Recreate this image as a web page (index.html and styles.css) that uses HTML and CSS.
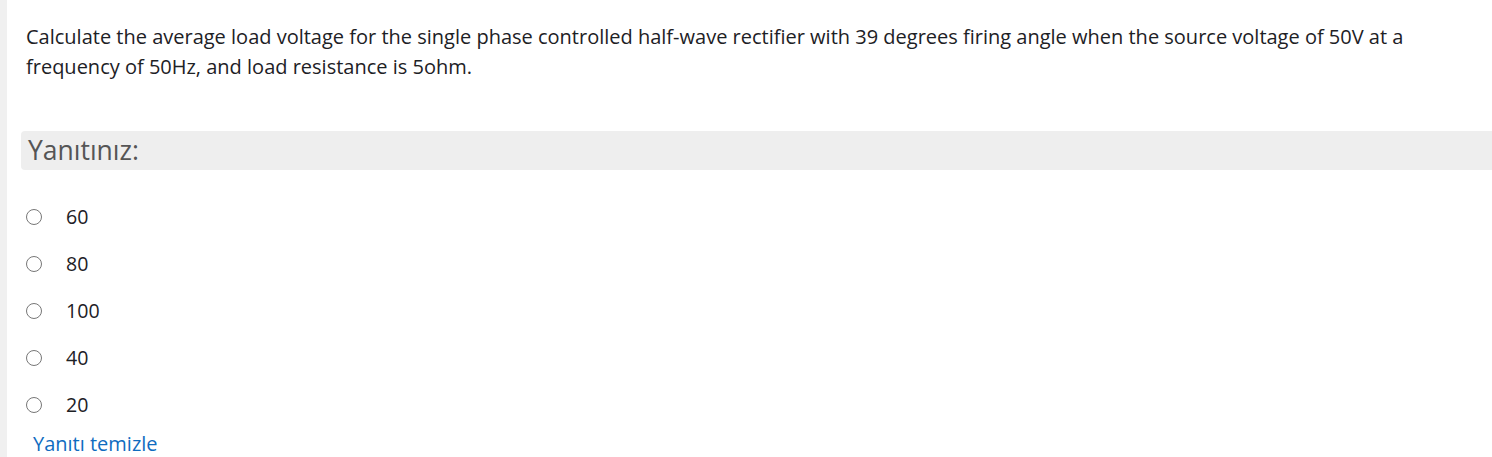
FILE: index.html
```html
<!DOCTYPE html>
<html lang="tr">
<head>
<meta charset="utf-8">
<title>Soru</title>
<link rel="stylesheet" href="styles.css">
</head>
<body>
<div class="page">
  <div class="strip"></div>
  <div class="main">
    <div class="qtext">Calculate the average load voltage for the single phase controlled half-wave rectifier with 39 degrees firing angle when the source voltage of 50V at a frequency of 50Hz, and load resistance is 5ohm.</div>
    <div class="prompt">Yanıtınız:</div>
    <div class="answers">
      <label class="opt"><input type="radio" name="q"><span>60</span></label>
      <label class="opt"><input type="radio" name="q"><span>80</span></label>
      <label class="opt"><input type="radio" name="q"><span>100</span></label>
      <label class="opt"><input type="radio" name="q"><span>40</span></label>
      <label class="opt"><input type="radio" name="q"><span>20</span></label>
    </div>
    <a class="clear" href="#">Yanıtı temizle</a>
  </div>
</div>
</body>
</html>
```
FILE: styles.css
```css
html, body {
  margin: 0;
  padding: 0;
  background: #fff;
  height: 100%;
  overflow: hidden;
}
body {
  font-family: "Open Sans", "Liberation Sans", sans-serif;
  color: #1d2125;
}
.page {
  display: flex;
  min-height: 457px;
}
.strip {
  width: 7px;
  flex: none;
  background: #f0f0f0;
}
.main {
  flex: 1;
  padding-left: 14px;
}
.qtext {
  margin-top: 22px;
  padding-left: 5px;
  padding-right: 80px;
  font-size: 20px;
  line-height: 30px;
}
.prompt {
  margin-top: 49px;
  height: 39px;
  box-sizing: border-box;
  padding: 3px 7px 4px;
  background: #eeeeee;
  border-radius: 4px 0 0 4px;
  font-size: 26.5px;
  line-height: 32px;
  color: #555;
}
.answers {
  margin-top: 23px;
  display: flex;
  flex-direction: column;
}
.opt {
  height: 47px;
  display: flex;
  align-items: center;
  font-size: 19.6px;
}
.opt input {
  appearance: none;
  -webkit-appearance: none;
  margin: 0 0 0 5px;
  width: 16px;
  height: 16px;
  border: 1.3px solid #777;
  border-radius: 50%;
  background: #fff;
  box-sizing: border-box;
}
.opt span {
  margin-left: 24px;
}
.clear {
  display: inline-block;
  margin-left: 12px;
  margin-top: 2px;
  font-size: 20px;
  line-height: 28px;
  color: #0f6cbf;
  text-decoration: none;
}
```
